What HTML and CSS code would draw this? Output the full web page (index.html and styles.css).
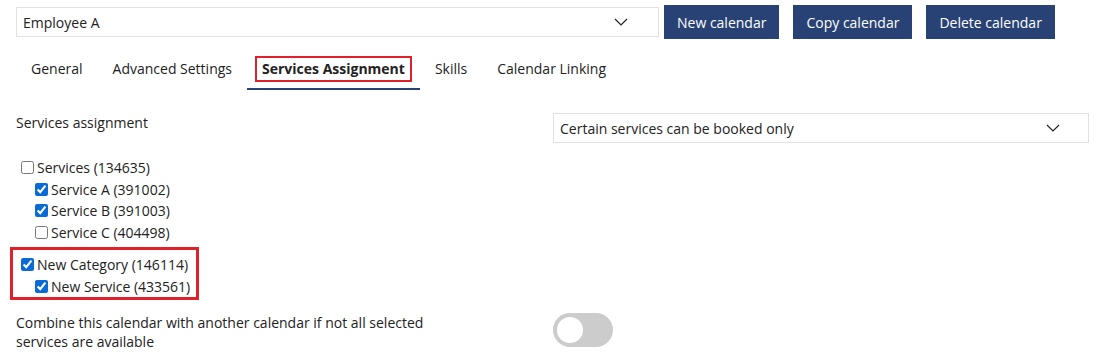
FILE: index.html
```html
<!DOCTYPE html>
<html lang="en">
<head>
    <meta charset="UTF-8">
    <title>Calendar settings</title>
    <link rel="stylesheet" href="styles.css">
</head>
<body>
    <div class="toolbar">
        <div class="select select-employee">
            <span>Employee A</span>
            <svg class="chevron" width="14" height="8" viewBox="0 0 14 8"><path d="M1 1l6 6 6-6" fill="none" stroke="#222" stroke-width="1.2"/></svg>
        </div>
        <button class="btn">New calendar</button>
        <button class="btn">Copy calendar</button>
        <button class="btn">Delete calendar</button>
    </div>

    <div class="tabs">
        <div class="tab">General</div>
        <div class="tab">Advanced Settings</div>
        <div class="tab active"><span class="marked">Services Assignment</span></div>
        <div class="tab">Skills</div>
        <div class="tab">Calendar Linking</div>
    </div>

    <div class="row assignment">
        <div class="label">Services assignment</div>
        <div class="select select-mode">
            <span>Certain services can be booked only</span>
            <svg class="chevron" width="14" height="8" viewBox="0 0 14 8"><path d="M1 1l6 6 6-6" fill="none" stroke="#222" stroke-width="1.2"/></svg>
        </div>
    </div>

    <div class="tree">
        <label class="item"><input type="checkbox">Services (134635)</label>
        <label class="item child"><input type="checkbox" checked>Service A (391002)</label>
        <label class="item child"><input type="checkbox" checked>Service B (391003)</label>
        <label class="item child"><input type="checkbox">Service C (404498)</label>
        <div class="highlight">
            <label class="item"><input type="checkbox" checked>New Category (146114)</label>
            <label class="item child"><input type="checkbox" checked>New Service (433561)</label>
        </div>
    </div>

    <div class="row combine">
        <div class="label wrap">Combine this calendar with another calendar if not all selected services are available</div>
        <div class="toggle"><span class="knob"></span></div>
    </div>
</body>
</html>
```

FILE: styles.css
```css
body {
    margin: 0;
    padding: 5px 10px 0 16px;
    font-family: "Open Sans", Arial, sans-serif;
    font-size: 14px;
    color: #222;
    background: #fff;
}
.toolbar {
    display: flex;
    align-items: center;
    gap: 14px;
}
.select {
    display: flex;
    align-items: center;
    justify-content: space-between;
    height: 30px;
    box-sizing: border-box;
    border: 1px solid #e2e2e2;
    padding: 0 30px 0 6px;
    flex: none;
}
.select-employee {
    width: 643px;
    margin-right: -9px;
}
.btn {
    height: 34px;
    padding: 0 13px;
    border: none;
    background: #284275;
    color: #fff;
    font-family: inherit;
    font-size: 14px;
}
.tabs {
    display: flex;
    margin-top: 17px;
}
.tab {
    padding: 3px 15px 9px 15px;
    border-bottom: 2px solid transparent;
    line-height: 20px;
}
.tab.active {
    border-bottom-color: #284275;
    padding: 0 8px 6px 8px;
    font-weight: bold;
}
.marked {
    display: inline-block;
    border: 2px solid #e0202b;
    padding: 1px 5px;
}
.row {
    display: flex;
}
.label {
    width: 537px;
    flex: none;
    line-height: 19px;
}
.assignment {
    margin-top: 23px;
}
.select-mode {
    width: 536px;
    padding-right: 28px;
}
.tree {
    margin-top: 14px;
}
.item {
    display: flex;
    align-items: center;
    height: 21.5px;
}
.item input {
    margin: 0 3px 0 5px;
    width: 13px;
    height: 13px;
    accent-color: #0b6bd6;
}
.item.child input {
    margin-left: 19px;
}
.highlight {
    display: inline-block;
    border: 3px solid #e0202b;
    margin: 4px 0 0 -6px;
    padding: 4px 6px 0 3px;
}
.combine {
    margin-top: 13px;
    align-items: flex-start;
}
.wrap {
    width: 440px;
    margin-right: 97px;
}
.toggle {
    width: 60px;
    height: 34px;
    border-radius: 17px;
    background: #ccc;
    display: flex;
    align-items: center;
    padding-left: 4px;
    box-sizing: border-box;
}
.knob {
    width: 26px;
    height: 26px;
    border-radius: 50%;
    background: #fff;
}
```
